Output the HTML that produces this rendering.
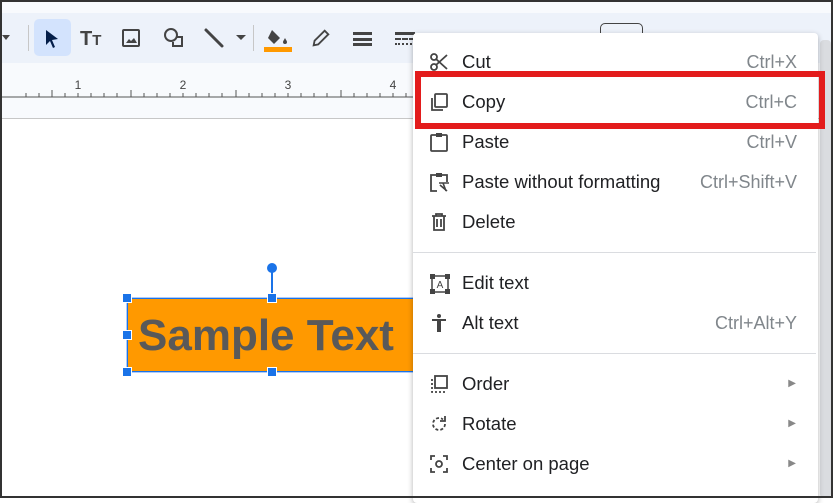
<!DOCTYPE html>
<html><head><style>
*{margin:0;padding:0;box-sizing:border-box}
body{width:833px;height:498px;overflow:hidden;position:relative;background:#fff;font-family:"Liberation Sans",sans-serif}
.frame{position:absolute;inset:0;border:2px solid #333;z-index:50;pointer-events:none}
.tb{position:absolute;left:0;top:13px;width:833px;height:50px;background:#edf2fa}
.top{position:absolute;left:0;top:0;width:833px;height:13px;background:#f8fafd}
.ruler{position:absolute;left:0;top:63px;width:833px;height:56px;background:#f8fafd;border-bottom:1px solid #c7c7c7}
.m{position:absolute;left:413px;top:33px;width:405px;height:470px;background:#fff;box-shadow:0 2px 6px rgba(0,0,0,.3);border-radius:4px}
.it{position:absolute;left:0;width:405px;height:40px;font-size:18.5px;color:#202124;line-height:40px}
.it .t{position:absolute;left:49px}
.it .s{position:absolute;right:21px;color:#80868b;font-size:18px}
.it .a{position:absolute;right:22px;color:#888;font-size:10px}
.it svg{position:absolute;left:16px;top:10px}
.sep{position:absolute;left:0;width:403px;height:1px;background:#dadce0}
.h{position:absolute;width:10px;height:10px;background:#1a73e8;border:1px solid #fff}
</style></head><body>
<div class="top"></div>
<div class="tb">
 <div style="position:absolute;left:34px;top:6px;width:37px;height:37px;background:#d3e3fd;border-radius:5px"></div>
 <div style="position:absolute;left:28px;top:12px;width:1px;height:26px;background:#c7c7c7"></div>
 <div style="position:absolute;left:253px;top:12px;width:1px;height:26px;background:#c7c7c7"></div>
 <div style="position:absolute;left:2px;top:22px;border:4px solid transparent;border-top:5px solid #444"></div>
 <svg style="position:absolute;left:40px;top:14px" width="24" height="24" viewBox="0 0 24 24"><path d="M6 3l12 9-6 1 3 7-2 1-3-7-4 4z" fill="#041e49"/></svg>
 <div style="position:absolute;left:80px;top:15px;font-size:20px;font-weight:bold;color:#444">T<span style="font-size:15px">T</span></div>
 <svg style="position:absolute;left:120px;top:14px" width="22" height="22" viewBox="0 0 22 22"><rect x="3" y="3" width="16" height="16" rx="1" fill="none" stroke="#444" stroke-width="2"/><path d="M6 16l3-4 2 2 3-3 3 5z" fill="#444"/></svg>
 <svg style="position:absolute;left:162px;top:13px" width="24" height="24" viewBox="0 0 24 24"><circle cx="9" cy="9" r="6" fill="none" stroke="#444" stroke-width="2"/><path d="M15 11h5v9h-9v-4" fill="none" stroke="#444" stroke-width="2"/></svg>
 <svg style="position:absolute;left:202px;top:13px" width="24" height="24" viewBox="0 0 24 24"><path d="M4 4l16 16" stroke="#444" stroke-width="3" stroke-linecap="round"/></svg>
 <div style="position:absolute;left:236px;top:22px;border:5px solid transparent;border-top:5px solid #444"></div>
 <svg style="position:absolute;left:266px;top:12px" width="24" height="24" viewBox="0 0 24 24"><path d="M6 5l8 8-6 6-6-6z" fill="#444"/><path d="M19 13c1 2 2 3 2 4a2 2 0 0 1-4 0c0-1 1-2 2-4z" fill="#444"/></svg>
 <div style="position:absolute;left:264px;top:34px;width:28px;height:5px;background:#ff9900"></div>
 <svg style="position:absolute;left:310px;top:14px" width="22" height="22" viewBox="0 0 24 24"><path d="M4 20l1-5 11-11 4 4-11 11z" fill="none" stroke="#444" stroke-width="2"/></svg>
 <div style="position:absolute;left:353px;top:19px;width:19px;height:14px;border-top:3px solid #444;border-bottom:3px solid #444"><div style="margin-top:3px;height:3px;background:#444"></div></div>
 <div style="position:absolute;left:395px;top:19px;width:20px;height:3px;background:#444"></div>
 <div style="position:absolute;left:395px;top:25px;width:20px;border-top:2px dashed #444"></div>
 <div style="position:absolute;left:395px;top:30px;width:20px;border-top:2px dotted #444"></div>
 <div style="position:absolute;left:600px;top:10px;width:43px;height:26px;border:1px solid #444;border-radius:5px"></div>
</div>
<div class="ruler">
 <svg width="420" height="40" style="position:absolute;left:0;top:0">
  <line x1="0" y1="34" x2="420" y2="34" stroke="#555" stroke-width="1"/>
  <g stroke="#555">
  <line x1="26" y1="30" x2="26" y2="34"/><line x1="39" y1="30" x2="39" y2="34"/><line x1="52" y1="27" x2="52" y2="34"/><line x1="65" y1="30" x2="65" y2="34"/><line x1="78" y1="30" x2="78" y2="34"/>
  <line x1="91" y1="30" x2="91" y2="34"/><line x1="104" y1="30" x2="104" y2="34"/><line x1="117" y1="30" x2="117" y2="34"/><line x1="131" y1="27" x2="131" y2="34"/><line x1="144" y1="30" x2="144" y2="34"/><line x1="157" y1="30" x2="157" y2="34"/><line x1="170" y1="30" x2="170" y2="34"/><line x1="183" y1="30" x2="183" y2="34"/>
  <line x1="196" y1="30" x2="196" y2="34"/><line x1="209" y1="30" x2="209" y2="34"/><line x1="222" y1="30" x2="222" y2="34"/><line x1="236" y1="27" x2="236" y2="34"/><line x1="249" y1="30" x2="249" y2="34"/><line x1="262" y1="30" x2="262" y2="34"/><line x1="275" y1="30" x2="275" y2="34"/><line x1="288" y1="30" x2="288" y2="34"/>
  <line x1="301" y1="30" x2="301" y2="34"/><line x1="314" y1="30" x2="314" y2="34"/><line x1="327" y1="30" x2="327" y2="34"/><line x1="341" y1="27" x2="341" y2="34"/><line x1="354" y1="30" x2="354" y2="34"/><line x1="367" y1="30" x2="367" y2="34"/><line x1="380" y1="30" x2="380" y2="34"/><line x1="393" y1="30" x2="393" y2="34"/><line x1="406" y1="30" x2="406" y2="34"/>
  </g>
  <g font-size="12" fill="#444" font-family="Liberation Sans" text-anchor="middle"><text x="78" y="26">1</text><text x="183" y="26">2</text><text x="288" y="26">3</text><text x="393" y="26">4</text></g>
 </svg>
</div>
<div style="position:absolute;left:127px;top:298px;width:290px;height:74px;background:#ff9900;border:1px solid #1a73e8;outline:1px solid #aecbfa"></div>
<div style="position:absolute;left:138px;top:309px;font-size:44px;font-weight:bold;color:#595959;line-height:54px">Sample Text</div>
<div style="position:absolute;left:271px;top:270px;width:1.5px;height:28px;background:#1a73e8"></div>
<div style="position:absolute;left:267px;top:263px;width:10px;height:10px;border-radius:50%;background:#1a73e8"></div>
<div class="h" style="left:122px;top:293px"></div><div class="h" style="left:267px;top:293px"></div><div class="h" style="left:122px;top:330px"></div><div class="h" style="left:122px;top:367px"></div><div class="h" style="left:267px;top:367px"></div>
<div style="position:absolute;left:820px;top:40px;width:11px;height:458px;background:#dadce0;border-radius:4px"></div>
<div class="m">
 <div class="it" style="top:9px"><svg width="20" height="20" viewBox="0 0 20 20"><circle cx="5" cy="5" r="3" fill="none" stroke="#444" stroke-width="1.8"/><circle cx="5" cy="15" r="3" fill="none" stroke="#444" stroke-width="1.8"/><path d="M7 7l11 10M7 13L18 3" stroke="#444" stroke-width="1.8"/></svg><span class="t">Cut</span><span class="s">Ctrl+X</span></div>
 <div class="it" style="top:49px"><svg width="20" height="20" viewBox="0 0 20 20"><rect x="6" y="2" width="12" height="13" rx="1" fill="none" stroke="#444" stroke-width="1.8"/><path d="M3 6v12h11" fill="none" stroke="#444" stroke-width="1.8"/></svg><span class="t">Copy</span><span class="s">Ctrl+C</span></div>
 <div class="it" style="top:89px"><svg width="20" height="20" viewBox="0 0 20 20"><rect x="2" y="3" width="16" height="16" rx="1" fill="none" stroke="#444" stroke-width="1.8"/><rect x="7" y="1" width="6" height="4" fill="#444"/></svg><span class="t">Paste</span><span class="s">Ctrl+V</span></div>
 <div class="it" style="top:129px"><svg width="22" height="20" viewBox="0 0 22 20"><path d="M8 19H2V3h16v7" fill="none" stroke="#444" stroke-width="1.8"/><rect x="7" y="1" width="6" height="4" fill="#444"/><path d="M10 11h10M14 11l3 8M11 13l7 6" stroke="#444" stroke-width="1.6"/></svg><span class="t">Paste without formatting</span><span class="s">Ctrl+Shift+V</span></div>
 <div class="it" style="top:169px"><svg width="20" height="20" viewBox="0 0 20 20"><path d="M3 4h14M7 4V2h6v2M5 4v14h10V4M8 7v8M12 7v8" fill="none" stroke="#444" stroke-width="1.8"/></svg><span class="t">Delete</span></div>
 <div class="sep" style="top:219px"></div>
 <div class="it" style="top:230px"><svg width="22" height="22" viewBox="0 0 22 22"><rect x="3" y="3" width="16" height="16" fill="none" stroke="#444" stroke-width="1.5"/><rect x="1" y="1" width="5" height="5" fill="#444"/><rect x="16" y="1" width="5" height="5" fill="#444"/><rect x="1" y="16" width="5" height="5" fill="#444"/><rect x="16" y="16" width="5" height="5" fill="#444"/><text x="11" y="15" font-size="10" text-anchor="middle" fill="#444" font-family="Liberation Sans">A</text></svg><span class="t">Edit text</span></div>
 <div class="it" style="top:270px"><svg width="20" height="20" viewBox="0 0 20 20"><circle cx="10" cy="3" r="2" fill="#444"/><path d="M3 6h14v2h-5v11h-2v-6h0v6H8V8H3z" fill="#444"/></svg><span class="t">Alt text</span><span class="s">Ctrl+Alt+Y</span></div>
 <div class="sep" style="top:320px"></div>
 <div class="it" style="top:331px"><svg width="20" height="20" viewBox="0 0 20 20"><rect x="6" y="2" width="12" height="12" fill="none" stroke="#444" stroke-width="1.8"/><path d="M3 5v13h13" fill="none" stroke="#444" stroke-width="1.8" stroke-dasharray="2 2"/></svg><span class="t">Order</span><span class="a">&#9654;</span></div>
 <div class="it" style="top:371px"><svg width="20" height="20" viewBox="0 0 20 20"><path d="M16 10a6 6 0 1 1-2-4.5" fill="none" stroke="#444" stroke-width="1.8" stroke-dasharray="3 2"/><path d="M16 2v5h-5" fill="none" stroke="#444" stroke-width="1.8"/></svg><span class="t">Rotate</span><span class="a">&#9654;</span></div>
 <div class="it" style="top:411px"><svg width="20" height="20" viewBox="0 0 20 20"><path d="M2 6V2h4M14 2h4v4M18 14v4h-4M6 18H2v-4" fill="none" stroke="#444" stroke-width="1.8"/><circle cx="10" cy="10" r="3" fill="none" stroke="#444" stroke-width="1.8"/></svg><span class="t">Center on page</span><span class="a">&#9654;</span></div>
</div>
<div style="position:absolute;left:415px;top:71px;width:410px;height:58px;border:6px solid #e31c1c"></div>
<div class="frame"></div>
</body></html>
